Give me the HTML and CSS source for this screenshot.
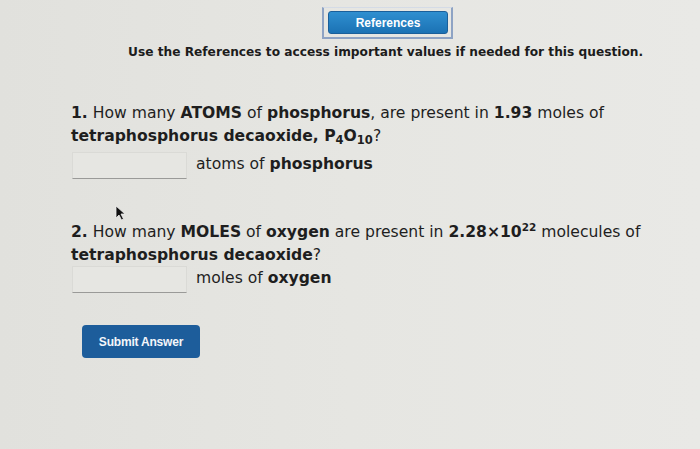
FILE: index.html
```html
<!DOCTYPE html>
<html>
<head>
<meta charset="utf-8">
<link rel="stylesheet" href="styles.css">
</head>
<body>
<div class="page">
  <div class="refbar">
    <div class="refframe"><button class="refbtn">References</button></div>
  </div>
  <p class="instr">Use the References to access important values if needed for this question.</p>

  <div class="q q1">
    <p class="qtext"><b>1.</b> How many <b>ATOMS</b> of <b>phosphorus</b>, are present in <b>1.93</b> moles of <b>tetraphosphorus decaoxide, P<sub>4</sub>O<sub>10</sub></b>?</p>
    <div class="answer"><span class="box"></span><span class="unit">atoms of <b>phosphorus</b></span></div>
  </div>

  <div class="cursor">
    <svg width="12" height="16" viewBox="0 0 12 16"><path d="M1 1 L1 13 L4 10 L6.5 15 L8.5 14 L6 9 L10 9 Z" fill="#111" stroke="#eee" stroke-width="0.8"/></svg>
  </div>

  <div class="q q2">
    <p class="qtext"><b>2.</b> How many <b>MOLES</b> of <b>oxygen</b> are present in <b>2.28×10<sup>22</sup></b> molecules of <b>tetraphosphorus decaoxide</b>?</p>
    <div class="answer"><span class="box"></span><span class="unit">moles of <b>oxygen</b></span></div>
  </div>

  <button class="submit">Submit Answer</button>
</div>
</body>
</html>
```
FILE: styles.css
```css
html, body {
  margin: 0;
  padding: 0;
}
body {
  width: 700px;
  height: 449px;
  overflow: hidden;
  background: linear-gradient(90deg, #e1e1dd 0%, #e6e6e2 50%, #e9e9e6 100%);
  font-family: "DejaVu Sans", Verdana, sans-serif;
  color: #1e1e1e;
}
.page {
  padding-top: 7px;
}
.refbar {
  padding-left: 322px;
}
.refframe {
  width: 123px;
  height: 26px;
  padding: 3px 0 0 4px;
  border: 1px solid #b5c3d8;
  border-left: 2px solid #8ea3c4;
  border-right: 2px solid #8ea3c4;
  border-bottom: 2px solid #8ea3c4;
  border-top-color: #d4dbe6;
}
.refbtn {
  display: block;
  width: 120px;
  height: 23px;
  border: 1px solid #1a5f9a;
  border-radius: 3px;
  background: linear-gradient(#2f8fd0, #1b72b4);
  color: #fff;
  font-family: "Liberation Sans", Arial, sans-serif;
  font-weight: bold;
  font-size: 12px;
  padding: 0;
}
.instr {
  margin: 5px 0 0 128px;
  font-weight: bold;
  font-size: 12.2px;
  line-height: 16px;
  color: #1c1c1c;
}
.q {
  padding-left: 71px;
}
.q1 {
  margin-top: 42px;
}
.qtext {
  margin: 0;
  font-size: 15.6px;
  line-height: 23px;
  width: 590px;
}
.qtext sub {
  font-size: 11.5px;
  vertical-align: -3px;
  line-height: 0;
}
.qtext sup {
  font-size: 10.5px;
  vertical-align: 6px;
  line-height: 0;
}
.answer {
  display: flex;
  align-items: flex-start;
  margin-top: 4px;
}
.q2 .answer {
  margin-top: -1px;
}
.box {
  display: block;
  width: 113px;
  height: 25px;
  border: 1px solid #dadad6;
  border-bottom: 1px solid #9a9a98;
  background: #e6e6e2;
  margin-left: 1px;
}
.unit {
  font-size: 15.6px;
  margin-left: 9px;
  margin-top: 3px;
}
.cursor {
  padding-left: 115px;
  margin-top: 26px;
  height: 16px;
}
.submit {
  display: block;
  margin: 32px 0 0 82px;
  width: 118px;
  height: 33px;
  border: none;
  border-radius: 4px;
  background: #1d5d9b;
  color: #f4f6fa;
  font-family: "Liberation Sans", Arial, sans-serif;
  font-size: 12px;
  font-weight: bold;
  letter-spacing: -0.2px;
}
```
